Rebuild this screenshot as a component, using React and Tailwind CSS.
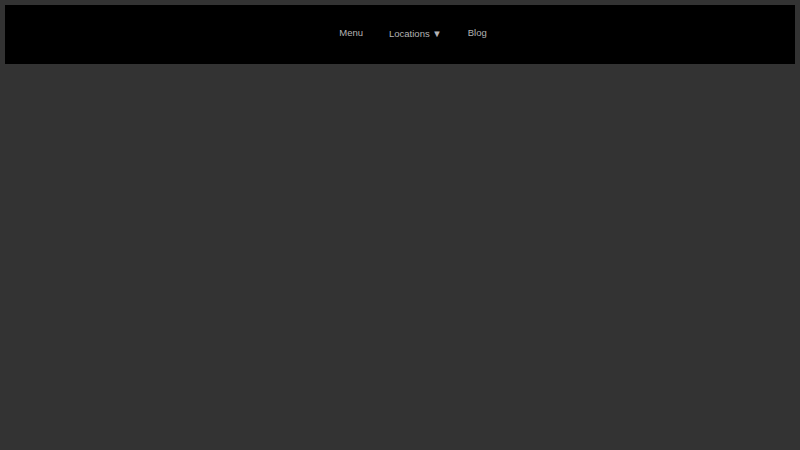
import React from 'react';

// Top navigation bar on a dark page
const App = () => {
    return (
        <div className="min-h-screen w-full bg-[#333333] p-[5px]" style={{ fontFamily: '"Liberation Sans", Arial, sans-serif' }}>
            <nav className="h-[59px] bg-black flex items-center justify-center pl-[26px]">
                <ul className="flex items-center gap-[26px] text-[9.5px] text-[#b4b4b4]">
                    <li className="cursor-pointer -mt-[2px]">Menu</li>
                    <li className="cursor-pointer">Locations ▼</li>
                    <li className="cursor-pointer -mt-[2px]">Blog</li>
                </ul>
            </nav>
        </div>
    );
};

export default App;
